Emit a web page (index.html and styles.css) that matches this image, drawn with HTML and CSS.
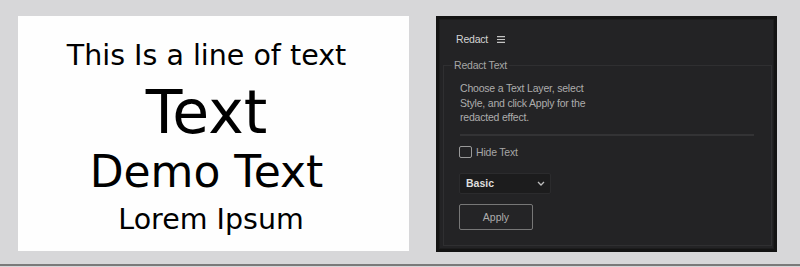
FILE: index.html
```html
<!DOCTYPE html>
<html lang="en">
<head>
  <meta charset="UTF-8" />
  <meta name="viewport" content="width=device-width, initial-scale=1.0" />
  <title>Redact Text</title>
  <link rel="stylesheet" href="styles.css">
</head>
<body>
  <div class="stage">
    <div class="preview">
      <div class="line line-1">This Is a line of text</div>
      <div class="line line-2">Text</div>
      <div class="line line-3">Demo Text</div>
      <div class="line line-4">Lorem Ipsum</div>
    </div>

    <div class="panel">
      <div class="panel-head">
        <span class="panel-title">Redact</span>
        <svg class="menu-icon" width="8" height="7" viewBox="0 0 8 7">
          <path d="M0 0.6H8M0 3.5H8M0 6.4H8" stroke="#c4c4c4" stroke-width="1.1" fill="none" />
        </svg>
      </div>

      <fieldset class="group">
        <legend class="group-title">Redact Text</legend>
        <p class="hint">Choose a Text Layer, select<br>Style, and click Apply for the<br>redacted effect.</p>
        <div class="sep"></div>
        <label class="check">
          <span class="box"></span>
          <span>Hide Text</span>
        </label>
        <div class="select">
          <span>Basic</span>
          <svg width="8" height="5" viewBox="0 0 8 5">
            <path d="M1 1L4 4L7 1" stroke="#bdbdbd" stroke-width="1.3" fill="none" />
          </svg>
        </div>
        <button class="btn">Apply</button>
      </fieldset>
    </div>
  </div>
</body>
</html>
```

FILE: styles.css
```css
* {
  box-sizing: border-box;
  margin: 0;
  padding: 0;
}
body {
  background: #d7d7d9;
  height: 267px;
  overflow: hidden;
}
.stage {
  display: flex;
  gap: 27px;
  height: 266px;
  padding: 16px 0 0 18px;
  border-bottom: 2px solid #7a7a7a;
}
.preview {
  width: 391px;
  height: 235px;
  background: #fefefe;
  padding: 20px 14px 0 0;
  font-family: "DejaVu Sans", sans-serif;
  color: #000;
  text-align: center;
}
.line {
  white-space: nowrap;
}
.line-1 {
  font-size: 28.5px;
  line-height: 40px;
}
.line-2 {
  font-size: 60px;
  line-height: 72px;
}
.line-3 {
  font-size: 44px;
  line-height: 48px;
}
.line-4 {
  font-size: 28.5px;
  line-height: 48px;
  padding-left: 9px;
}
.panel {
  width: 341px;
  height: 236px;
  background: #232325;
  border: 3px solid #131313;
  box-shadow: inset 0 0 0 1px #1c1c1d;
  padding: 1px 1px 2px 4px;
  font-family: "Liberation Sans", Arial, sans-serif;
  font-size: 10.5px;
  letter-spacing: -0.2px;
}
.panel-head {
  height: 38px;
  display: flex;
  align-items: center;
  gap: 9px;
  padding: 0 0 0 13px;
}
.panel-title {
  color: #d4d4d4;
}
.group {
  border: 1px solid #2f2f31;
  margin-right: 1px;
  padding: 0 0 16px 16px;
  height: 188px;
}
.group-title {
  color: #a6a6a6;
  padding: 0 2px;
  margin-left: -8px;
  line-height: 14px;
}
.hint {
  color: #adadad;
  line-height: 14.5px;
  margin-top: 9px;
}
.sep {
  height: 2px;
  background: #333335;
  margin: 9px 17px 0 0;
}
.check {
  display: flex;
  align-items: center;
  gap: 4px;
  margin: 10px 0 0 -1px;
  color: #a6a6a6;
  height: 12px;
}
.box {
  width: 13px;
  height: 12px;
  border: 1.5px solid #9a9a9a;
  border-radius: 2px;
}
.select {
  width: 92px;
  height: 21px;
  margin: 15px 0 0 -1px;
  background: #1c1c1d;
  border: 1px solid #2b2b2d;
  border-radius: 2px;
  display: flex;
  align-items: center;
  justify-content: space-between;
  padding: 0 5px 0 6px;
  color: #dedede;
  font-weight: bold;
  letter-spacing: 0;
}
.btn {
  display: block;
  width: 74px;
  height: 26px;
  margin: 10px 0 0 -1px;
  background: #242426;
  border: 1.5px solid #777;
  border-radius: 2px;
  color: #adadad;
  font-family: "Liberation Sans", Arial, sans-serif;
  font-size: 10.5px;
}
```
